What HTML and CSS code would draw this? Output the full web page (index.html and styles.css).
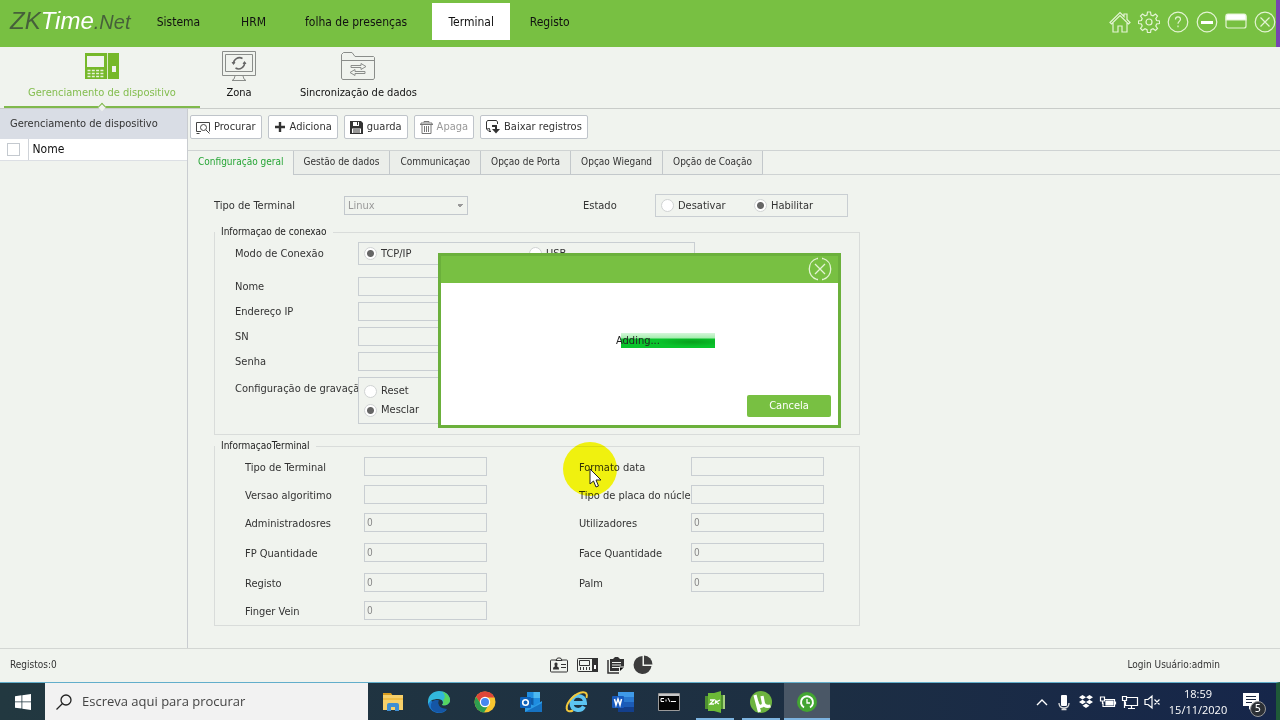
FILE: index.html
```html
<!DOCTYPE html>
<html lang="pt">
<head>
    <meta charset="UTF-8">
    <meta name="viewport" content="width=device-width, initial-scale=1.0">
    <title>ZKTime.Net</title>
    <link rel="stylesheet" href="styles.css">
</head>
<body>
    <div class="app">
        <header class="topbar">
            <h1 class="logo">ZK<span class="logo-time">Time</span><span class="logo-net">.Net</span></h1>
            <nav class="menu">
                <a href="#">Sistema</a>
                <a href="#">HRM</a>
                <a href="#">folha de presenças</a>
                <a href="#" class="active">Terminal</a>
                <a href="#">Registo</a>
            </nav>
            <div class="window-buttons">
                <button type="button" aria-label="Início">
                    <svg viewBox="0 0 22 22"><path d="M1 11.5 11 1.500l4 4V3h3v5.500l3 3-1.500 1.500L11 4.500l-8.500 8.500z M4 12v9h5v-6h4v6h5v-9"/></svg>
                </button>
                <button type="button" aria-label="Configurações">
                    <svg viewBox="0 0 22 22"><path d="M9.500 1h3l.5 3 2 .8 2.500-1.800 2 2-1.700 2.500.8 2 3 .5v2.500l-3 .5-.8 2 1.700 2.500-2 2-2.500-1.700-2 .8-.5 3h-3l-.5-3-2-.8-2.500 1.700-2-2 1.700-2.500-.8-2-3-.5V10l3-.5.8-2L2.500 5l2-2L7 4.800l2-.8z"/><circle cx="11" cy="11" r="3"/></svg>
                </button>
                <button type="button" aria-label="Ajuda">
                    <svg viewBox="0 0 22 22"><circle cx="11" cy="11" r="9.800"/><path d="M8.500 8.500c0-3.500 5-3.300 5-.2 0 2-2.500 2.200-2.500 4.400M11 14.500v1.800"/></svg>
                </button>
                <button type="button" aria-label="Minimizar">
                    <svg viewBox="0 0 22 22"><circle cx="11" cy="11" r="9.800"/><path class="thick" d="M5 11.500h12"/></svg>
                </button>
                <button type="button" aria-label="Maximizar">
                    <svg viewBox="0 0 22 22"><rect x="1" y="4" width="20" height="13" rx="2"/><path class="solid" d="M1 9V5q0-2 2-2h16q2 0 2 2v4z"/></svg>
                </button>
                <button type="button" aria-label="Fechar">
                    <svg viewBox="0 0 22 22"><circle cx="11" cy="11" r="9.800"/><path d="m6.500 6.500 9 9m0-9-9 9"/></svg>
                </button>
            </div>
        </header>

        <nav class="ribbon">
            <a href="#" class="active">
                <svg width="36" height="28" viewBox="0 0 36 28"><path fill="#76b82a" d="M1 1h34v26H1z"/><path fill="#f0f3ee" d="M3 4h17v11H3z M28 14h4v6h-4z"/><path stroke="#dcebc8" d="M23.500 1v26"/><path stroke="#e6f1d8" stroke-width="1.500" stroke-dasharray="3 1.300" d="M3.500 18.500h16M3.500 21.500h16M3.500 24.500h16"/></svg>
                Gerenciamento de dispositivo
            </a>
            <a href="#">
                <svg width="34" height="32" viewBox="0 0 34 32" fill="none" stroke="#8a8d8a"><path d="M.5 1.500h33v24H.5z M3.500 4.500h27v17h-27z M13 26l-1 3-2 1.500h14L22 29l-1-3"/><path stroke="#666" stroke-width="1.500" d="M11.500 14a6 6 0 0 1 9-5.500M22.500 12a6 6 0 0 1-9 6"/><path fill="#666" stroke="none" d="m9.500 12 4 0-2 3z m11 2 4 0-2-3z"/></svg>
                Zona
            </a>
            <a href="#">
                <svg width="34" height="28" viewBox="0 0 34 28" fill="none" stroke="#8a8d8a"><path d="M.5 26V2.500l2-2H11l3 4h18.500l1 1V26l-1 1.500h-31z M.5 8.500h33"/><path d="M10 13.500h10v-2l5 3-5 3v-2H10z M24 19.500H14v-2l-5 3 5 3v-2h10z"/></svg>
                Sincronização de dados
            </a>
        </nav>

        <div class="workspace">
            <aside class="sidebar">
                <h2>Gerenciamento de dispositivo</h2>
                <table>
                    <thead>
                        <tr>
                            <th class="check"><input type="checkbox" aria-label="Selecionar todos"></th>
                            <th>Nome</th>
                        </tr>
                    </thead>
                </table>
            </aside>

            <main class="content">
                <div class="toolbar">
                    <button type="button">
                        <svg width="14" height="14" viewBox="0 0 14 14" fill="none" stroke="#444"><path d="M5 11.500H.5v-9h13v9M.5 13.500h3M10 10l3.500 3.500"/><circle cx="7.500" cy="7.500" r="3"/></svg>
                        Procurar
                    </button>
                    <button type="button">
                        <svg width="12" height="12" viewBox="0 0 12 12"><path stroke="#333" stroke-width="2.400" d="M6 1v10M1 6h10"/></svg>
                        Adiciona
                    </button>
                    <button type="button">
                        <svg width="13" height="13" viewBox="0 0 13 13"><path fill="#333" d="M0 0h11l2 2v11H0z"/><path fill="#fff" d="M3 1h6v4H3z M2 7.500h9V12H2z"/><path stroke="#333" d="M7.500 1v3M3 9h7M3 11h7"/></svg>
                        guarda
                    </button>
                    <button type="button" disabled>
                        <svg width="13" height="13" viewBox="0 0 13 13" fill="none" stroke="#777"><path d="M1 3.500V2h11v1.500M0 3.500h13M4 1.500v-1h5v1M2 4v8.500h9V4M4.500 5v6M6.500 5v6M8.500 5v6"/></svg>
                        Apaga
                    </button>
                    <button type="button">
                        <svg width="14" height="14" viewBox="0 0 14 14" fill="none" stroke="#333"><path d="M5 11.500H3L.5 9V2l1-1.500h9l1 1.500v2M1 9l2.500-.5.5 3"/><path stroke-width="2" d="M6 6h4v6"/><path fill="#333" stroke="none" d="M6 9h8l-4 4.500z"/></svg>
                        Baixar registros
                    </button>
                </div>

                <nav class="tabs">
                    <a href="#" class="active">Configuração geral</a>
                    <a href="#">Gestão de dados</a>
                    <a href="#">Communicaçao</a>
                    <a href="#">Opçao de Porta</a>
                    <a href="#">Opçao Wiegand</a>
                    <a href="#">Opção de Coação</a>
                </nav>

                <form class="device-form">
                    <div class="form-top">
                        <label for="tipo">Tipo de Terminal</label>
                        <select id="tipo" disabled>
                            <option>Linux</option>
                        </select>
                        <span class="estado">Estado</span>
                        <div class="radio-box">
                            <label><input type="radio" name="estado">Desativar</label>
                            <label><input type="radio" name="estado" checked>Habilitar</label>
                        </div>
                    </div>

                    <fieldset class="conexao">
                        <legend>Informaçao de conexao</legend>
                        <span>Modo de Conexão</span>
                        <div class="radio-box modo">
                            <label><input type="radio" name="modo" checked>TCP/IP</label>
                            <label><input type="radio" name="modo">USB</label>
                        </div>
                        <label for="nome">Nome</label>
                        <input type="text" id="nome">
                        <label for="ip">Endereço IP</label>
                        <input type="text" id="ip">
                        <label for="sn">SN</label>
                        <input type="text" id="sn">
                        <label for="senha">Senha</label>
                        <input type="password" id="senha">
                        <span class="gravacao">Configuração de gravação</span>
                        <div class="radio-box stacked">
                            <label><input type="radio" name="gravacao">Reset</label>
                            <label><input type="radio" name="gravacao" checked>Mesclar</label>
                        </div>
                    </fieldset>

                    <fieldset class="terminal">
                        <legend>InformaçaoTerminal</legend>
                        <label for="t-tipo">Tipo de Terminal</label>
                        <input type="text" id="t-tipo" readonly>
                        <label for="t-data" class="second">Formato data</label>
                        <input type="text" id="t-data" readonly>

                        <label for="t-versao">Versao algoritimo</label>
                        <input type="text" id="t-versao" readonly>
                        <label for="t-placa" class="second">Tipo de placa do núcleo</label>
                        <input type="text" id="t-placa" readonly>

                        <label for="t-admin">Administradosres</label>
                        <input type="text" id="t-admin" value="0" readonly>
                        <label for="t-util" class="second">Utilizadores</label>
                        <input type="text" id="t-util" value="0" readonly>

                        <label for="t-fp">FP Quantidade</label>
                        <input type="text" id="t-fp" value="0" readonly>
                        <label for="t-face" class="second">Face Quantidade</label>
                        <input type="text" id="t-face" value="0" readonly>

                        <label for="t-reg">Registo</label>
                        <input type="text" id="t-reg" value="0" readonly>
                        <label for="t-palm" class="second">Palm</label>
                        <input type="text" id="t-palm" value="0" readonly>

                        <label for="t-vein">Finger Vein</label>
                        <input type="text" id="t-vein" value="0" readonly>
                    </fieldset>
                </form>
            </main>
        </div>

        <footer class="statusbar">
            <span class="count">Registos:0</span>
            <div class="status-icons">
                <svg width="18" height="16" viewBox="0 0 18 16" fill="none" stroke="#333"><rect x=".5" y="3" width="17" height="12" rx="1"/><path fill="#f0f3ee" d="M6 3.500 7.500 1h3L12 3.500z"/><path d="M11 7.500h5M11 10.500h5"/><path fill="#333" stroke="none" d="M3 12.500q0-3 2-3-1.500-4 1-4t1 4q2 0 2 3z"/></svg>
                <svg width="21" height="16" viewBox="0 0 21 16"><rect x=".5" y="1.500" width="20" height="13" rx="1" fill="none" stroke="#333"/><path fill="#333" d="M15 1h6v14h-6z"/><path fill="#fff" d="M17 8h2v4h-2z"/><path fill="none" stroke="#333" d="M2.500 3.500h10v5h-10z"/><path stroke="#333" stroke-width="3" stroke-dasharray="1 2" d="M3 11.500h10"/></svg>
                <svg width="17" height="18" viewBox="0 0 17 18"><path fill="none" stroke="#333" stroke-width="1.500" d="M1 4v13h11"/><path fill="#333" d="M3 3h3l2-2h3l2 2h4v8l-4 4H3z"/><path stroke="#f0f3ee" d="M5 6.500h9M5 9h9M5 11.500h7M12.500 15v-4H17"/></svg>
                <svg width="20" height="20" viewBox="0 0 20 20"><path fill="#3c3c3c" d="M9.500 1a9 9 0 1 0 9 10h-9z"/><path fill="#3c3c3c" d="M11 .500a9 9 0 0 1 8.500 9H11z"/></svg>
            </div>
            <span class="login">Login Usuário:admin</span>
        </footer>

        <dialog class="progress-dialog" open>
            <div class="dialog-title">
                <button type="button" aria-label="Fechar">
                    <svg viewBox="0 0 24 24"><path d="M9 1.500a11 11 0 0 0 0 21h1M15 1.500a11 11 0 0 1 0 21h-1M9 1.500h1M14 1.500h1M7 7l10 10M17 7 7 17"/></svg>
                </button>
            </div>
            <div class="dialog-body">
                <div class="progress">
                    <div class="progress-bar"></div>
                    <span>Adding...</span>
                </div>
                <button type="button" class="cancel">Cancela</button>
            </div>
        </dialog>

        <div class="pointer-halo"></div>
        <svg class="pointer" width="13" height="20" viewBox="0 0 13 20"><path fill="#fff" stroke="#222" d="M1 1v15l3.500-3 2.500 6 2.500-1L7 12h5z"/></svg>
    </div>

    <div class="taskbar">
        <button type="button" class="start" aria-label="Iniciar">
            <svg width="16" height="16" viewBox="0 0 16 16" fill="#fff"><path d="M0 2.200 6.500 1.300v6.200H0z M7.300 1.200 16 0v7.500H7.300z M0 8.300h6.500v6.200L0 13.700z M7.300 8.300H16V16l-8.700-1.200z"/></svg>
        </button>
        <label class="search">
            <svg width="16" height="16" viewBox="0 0 16 16" fill="none" stroke="#222" stroke-width="1.300"><circle cx="10" cy="6" r="5"/><path d="M6.500 9.500.5 15.500"/></svg>
            <input type="text" placeholder="Escreva aqui para procurar">
        </label>
        <div class="tasks">
            <button type="button" aria-label="Explorador de Ficheiros">
                <svg viewBox="0 0 24 24"><path fill="#d99b1c" d="M2 3h8l2 3H2z"/><path fill="#f7d06a" d="M2 5h20v15H2z"/><path fill="#f2bf45" d="M2 8h20v2H2z"/><path fill="#3f8fd4" d="M6 21v-6q0-2 2-2h8q2 0 2 2v6h-4v-4h-4v4z"/></svg>
            </button>
            <button type="button" aria-label="Edge">
                <svg viewBox="0 0 24 24"><path fill="#1b79cf" d="M1 12a11 11 0 0 0 19 7.500c-5 2-9-1-8.500-5C6 12 2 9 1 12z"/><path fill="#1556a5" d="M4 18c-1-7 4-9 8-7.500-2 3 0 8 8 8.500-4 5-13 5-16-1z"/><path fill="#32b8dc" d="M1 12C1 4.500 7 1 12 1c7 0 11 4.500 11 9 0 4-4 6-8 5 2-2 1-6-4-6-5 0-9 2-10 6z"/><path fill="#57d65f" d="M15 1.500c5 1.500 8 5 8 8.500 0 4-4 6-8 5 2-2 1.500-4 1-5 3-2 2-6-1-8.500z"/></svg>
            </button>
            <button type="button" aria-label="Chrome">
                <svg viewBox="0 0 24 24"><circle cx="12" cy="12" r="10.500" fill="#f9c62f"/><path fill="#dd4639" d="M3 6.700A10.500 10.500 0 0 1 21.500 7.500H12L8 14z"/><path fill="#2f9e4f" d="M3 6.700A10.500 10.500 0 0 0 11 22.500L15.500 15 8 14z"/><circle cx="12" cy="12" r="5.200" fill="#fff"/><circle cx="12" cy="12" r="4" fill="#4688f1"/></svg>
            </button>
            <button type="button" aria-label="Outlook">
                <svg viewBox="0 0 24 24"><path fill="#1f8de0" d="M8 2h13v14H8z"/><path fill="#4db8f0" d="M14.500 2H21v6h-6.500z"/><path fill="#0f5ca8" d="M8 8h6.500v7H8z"/><path fill="#2c9ce6" d="M6 11l9 5 8-5v11H6z"/><path fill="#1672c2" d="m6 22 17-9v9z"/><rect x="1" y="7" width="11" height="11" rx="1" fill="#0e62bb"/><circle cx="6.500" cy="12.500" r="2.800" fill="none" stroke="#fff" stroke-width="1.600"/></svg>
            </button>
            <button type="button" aria-label="Internet Explorer">
                <svg viewBox="0 0 24 24" fill="none"><path stroke="#5cc4f2" stroke-width="4" d="M6 13h14c0-9-13-10-13.500 0C6.500 21 16 22 19 16.500"/><path stroke="#f3c93c" stroke-width="2" d="M21.500 8C24-.5 14 1 7 8-1 16 .5 24 8 20.500"/></svg>
            </button>
            <button type="button" aria-label="Word">
                <svg viewBox="0 0 24 24"><path fill="#3f9ae8" d="M7 2h16v5H7z"/><path fill="#2a79d0" d="M7 7h16v5H7z"/><path fill="#1c5bb5" d="M7 12h16v5H7z"/><path fill="#133f8c" d="M7 17h16v5H7z"/><rect x="1" y="6" width="12" height="12" rx="1" fill="#185abd"/><path fill="none" stroke="#fff" stroke-width="1.500" d="m3.500 9 1.500 6 2-6 2 6 1.500-6"/></svg>
            </button>
            <button type="button" aria-label="Linha de comandos">
                <svg viewBox="0 0 24 24"><path fill="#050505" stroke="#9a9a9a" d="M1.500 3.500h21v17h-21z"/><path fill="#c8c8c8" d="M2 4h20v2H2z"/><path fill="none" stroke="#fff" d="M7 8.500H4v3h3M9 9.500v2M11 8l2 4M14 11.500h5"/></svg>
            </button>
            <button type="button" class="running" aria-label="ZK">
                <svg viewBox="0 0 24 24"><path fill="#4e9030" d="M2 6h4v13H2z M18 5h4v14h-4z"/><path fill="#a4cf7e" d="M20 5h2v14h-2z"/><path fill="#6cba37" d="M5 3h6l7-2v22l-7-2H5z"/><path fill="none" stroke="#fff" stroke-width="1.300" d="M7 10h4l-4 4h4M13 10l-1 4M17 10l-4 2 3 2"/></svg>
            </button>
            <button type="button" class="running" aria-label="uTorrent">
                <svg viewBox="0 0 24 24" fill="none"><circle cx="12" cy="12" r="11" fill="#6db43f"/><path stroke="#fff" stroke-width="3.200" d="m6 5 4.500 17M8 12c1 6 6 5 6.500 1.500L13 6m1.500 7.500c1 3 3 3.500 7 2.500"/></svg>
            </button>
            <button type="button" class="running current" aria-label="ZKTime.Net">
                <svg viewBox="0 0 24 24" fill="none"><circle cx="12" cy="12" r="10" fill="#43a532"/><path stroke="#fff" stroke-width="2" d="M9 17.500a6 6 0 1 1 6 0"/><path stroke="#fff" stroke-width="1.300" d="M12 9v4h3"/></svg>
            </button>
        </div>
        <div class="tray">
            <svg viewBox="0 0 20 20" fill="none" stroke="#fff" stroke-width="1.400"><path d="m5 13 5-5 5 5"/></svg>
            <svg viewBox="0 0 20 20"><rect x="7" y="3" width="6" height="11" rx="1" fill="#fff"/><path fill="none" stroke="#ddd" stroke-width="1.300" d="M5 11q0 5 5 5t5-5M10 16v2M7.500 17.500h5"/></svg>
            <svg viewBox="0 0 20 20" fill="#fff"><path d="m6.500 3 3.500 2.200L6.500 7.500 3 5.200z M13.500 3 17 5.200l-3.500 2.300L10 5.200z M6.500 7.700 10 10l-3.500 2.300L3 10z M13.500 7.700 17 10l-3.500 2.300L10 10z M10 11.500l3.500 2.200L10 16l-3.500-2.300z"/></svg>
            <svg viewBox="0 0 20 20" fill="none" stroke="#fff" stroke-width="1.200"><path d="M6 7.500h10.500v7H5v-4"/><path fill="#fff" d="M8 9h7v4H8z"/><path d="M17.500 9.500v3M2.500 5h4v4h-4zM4.500 9v3"/></svg>
            <svg viewBox="0 0 20 20" fill="none" stroke="#fff" stroke-width="1.200"><path d="M7 5.500h10.500v8h-12v-4M11.500 13.500v3M8 16.500h7M2.500 4.500h4v4h-4zM4.500 8.500V16"/></svg>
            <svg viewBox="0 0 20 20" fill="none" stroke="#fff" stroke-width="1.200"><path d="M3 7.500h3l4-3.500v12l-4-3.500H3zM12.500 7.500l5 5m0-5-5 5"/></svg>
        </div>
        <time class="clock">18:59<br>15/11/2020</time>
        <button type="button" class="notifications" aria-label="Notificações">
            <svg width="17" height="17" viewBox="0 0 17 17"><path fill="#fff" d="M0 0h16v13h-7l-3 4v-4H0z"/><path stroke="#1a2740" d="M3 3.500h10M3 6.500h10M3 9.500h6"/></svg>
            <span class="badge">5</span>
        </button>
    </div>
</body>
</html>
```
FILE: styles.css
```css
* {
    box-sizing: border-box;
}
body {
    margin: 0;
    min-height: 100vh;
    display: flex;
    flex-direction: column;
    font-family: Tahoma, "DejaVu Sans Condensed", "Noto Sans", sans-serif;
    font-size: 11px;
    line-height: 16px;
    color: #333;
    background-color: #f0f3ee;
}
a {
    color: inherit;
    text-decoration: none;
}
button, input, select {
    font: inherit;
    color: inherit;
}
svg {
    display: block;
    flex-shrink: 0;
}
.app {
    position: relative;
    flex: 1;
    display: flex;
    flex-direction: column;
}

/* Barra superior */
.topbar {
    display: flex;
    align-items: center;
    height: 47px;
    padding-bottom: 4px;
    background-color: #78c042;
    border-right: 4px solid #7745b0;
}
.logo {
    margin: 0;
    width: 130px;
    padding-left: 10px;
    font: italic 24px/28px "Liberation Sans", sans-serif;
    color: #46603a;
    white-space: nowrap;
}
.logo-time {
    color: #fff;
}
.logo-net {
    font-size: 20px;
}
.menu {
    display: flex;
    margin-left: 11px;
    font-size: 12px;
    color: #111;
}
.menu a {
    min-width: 75px;
    height: 37px;
    padding: 0 14px;
    line-height: 39px;
    text-align: center;
    white-space: nowrap;
}
.menu .active {
    min-width: 78px;
    margin: 0 2px 0 11px;
    background-color: #fff;
}
.window-buttons {
    display: flex;
    gap: 7px;
    margin-left: auto;
}
.window-buttons button {
    padding: 0;
    border: none;
    background: none;
}
.window-buttons svg {
    width: 22px;
    height: 22px;
    fill: none;
    stroke: #e4f4d4;
    stroke-width: 1.2;
}
.window-buttons .thick {
    stroke: #fff;
    stroke-width: 3;
}
.window-buttons .solid {
    fill: #fff;
}

/* Friso de módulos */
.ribbon {
    display: flex;
    height: 62px;
    padding-left: 4px;
    border-bottom: 1px solid #c9ccc9;
    color: #111;
}
.ribbon a {
    position: relative;
    display: flex;
    flex-direction: column;
    align-items: center;
    padding: 0 22px 7px;
    white-space: nowrap;
}
.ribbon a svg {
    margin: auto 0;
}
.ribbon .active {
    min-width: 196px;
    color: #83bd4e;
    border-bottom: 2px solid #80b94c;
    padding-bottom: 5px;
}
.ribbon .active::after {
    content: "";
    position: absolute;
    left: 50%;
    bottom: -4px;
    width: 5px;
    height: 5px;
    margin-left: -3px;
    border: solid #80b94c;
    border-width: 1px 0 0 1px;
    background-color: #f0f3ee;
    transform: rotate(45deg);
}

/* Área de trabalho */
.workspace {
    flex: 1;
    display: flex;
}
.sidebar {
    width: 188px;
    border-right: 1px solid #c9ccd0;
}
.sidebar h2 {
    margin: 0;
    padding: 0 10px;
    font-size: 11px;
    font-weight: normal;
    line-height: 30px;
    white-space: nowrap;
    background-color: #d9dde5;
}
.sidebar table {
    width: 100%;
    border-collapse: collapse;
    background-color: #fff;
}
.sidebar th {
    height: 21px;
    padding: 0 4px;
    border-bottom: 1px solid #dcdfe4;
    font-size: 12px;
    font-weight: normal;
    text-align: left;
    color: #111;
}
.sidebar .check {
    width: 28px;
    padding: 0 0 0 7px;
    border-right: 1px solid #cfd3d8;
}
input[type="checkbox"] {
    display: block;
    appearance: none;
    width: 13px;
    height: 13px;
    margin: 0;
    border: 1px solid #c4c9cf;
    background-color: #fff;
}
.content {
    flex: 1;
    min-width: 0;
}
.toolbar {
    display: flex;
    gap: 6px;
    padding: 6px 2px 11px;
}
.toolbar button {
    display: flex;
    align-items: center;
    gap: 4px;
    height: 24px;
    padding: 0 5px;
    border: 1px solid #bfc4ca;
    border-radius: 2px;
    background-color: #fff;
    white-space: nowrap;
}
.toolbar button:disabled {
    color: #999;
}
.tabs {
    display: flex;
    height: 25px;
    border-top: 1px solid #cfd3d3;
    font-size: 10px;
}
.tabs::after {
    content: "";
    flex: 1;
    border-left: 1px solid #c3c8cb;
    border-bottom: 1px solid #cfd3d3;
}
.tabs a {
    padding: 0 10px;
    border-left: 1px solid #c3c8cb;
    border-bottom: 1px solid #c3c8cb;
    line-height: 22px;
    white-space: nowrap;
    background-color: #ebeeea;
}
.tabs .active {
    padding: 0 9px;
    border-color: transparent;
    color: #27a536;
    background-color: #f0f3ee;
}

/* Formulário do dispositivo */
.device-form {
    max-width: 672px;
    padding: 19px 0 0 26px;
}
.form-top {
    display: flex;
    align-items: center;
    margin-bottom: 7px;
}
.form-top > label {
    width: 130px;
}
.form-top select {
    appearance: none;
    width: 124px;
    height: 19px;
    padding: 0 3px;
    border: 1px solid #c3c8cd;
    border-radius: 0;
    color: #999;
    opacity: 1;
    background: linear-gradient(45deg, transparent 50%, #999 50%) 112px 7px / 3px 3px no-repeat,
        linear-gradient(-45deg, transparent 50%, #999 50%) 115px 7px / 3px 3px no-repeat;
}
.form-top .estado {
    margin-left: 115px;
    width: 72px;
}
.form-top .radio-box {
    width: 193px;
}
.radio-box {
    display: grid;
    grid-template-columns: 1fr 1fr;
    align-items: center;
    min-height: 23px;
    padding-left: 5px;
    border: 1px solid #c9ced2;
}
.radio-box label {
    display: flex;
    align-items: center;
    gap: 4px;
}
input[type="radio"] {
    appearance: none;
    width: 13px;
    height: 13px;
    margin: 0;
    border: 1px solid #d0d3d3;
    border-radius: 50%;
    background-color: #fff;
}
input[type="radio"]:checked {
    background-image: radial-gradient(circle, #666 3px, #fff 4px);
}
fieldset {
    display: grid;
    align-items: center;
    margin: 0;
    border: 1px solid #d9dcda;
    white-space: nowrap;
}
legend {
    margin-left: -20px;
    padding: 0 6px;
    font-size: 10px;
    color: #222;
}
input[type="text"], input[type="password"] {
    width: 100%;
    height: 19px;
    padding: 0 2px;
    border: 1px solid #c9ced2;
    background-color: #f0f3ee;
}
.conexao {
    grid-template-columns: 123px 337px;
    row-gap: 6px;
    margin-bottom: 3px;
    padding: 2px 20px 10px;
}
.conexao > label, .conexao > span, .terminal label {
    overflow: hidden;
}
.modo {
    margin-bottom: 6px;
}
.conexao .gravacao {
    align-self: start;
    margin-top: 4px;
}
.conexao > span:first-of-type {
    margin-bottom: 6px;
}
.stacked {
    grid-template-columns: 1fr;
    align-content: center;
    row-gap: 3px;
    height: 47px;
}
.terminal {
    grid-template-columns: 119px 123px 204px 133px;
    grid-template-rows: 28px 28px 30px 30px 28px 19px;
    align-items: start;
    padding: 3px 30px 5px;
}
.terminal legend {
    margin-left: -30px;
}
.terminal label {
    line-height: 21px;
}
.terminal .second {
    padding-left: 92px;
}
.terminal input {
    font-size: 10px;
    color: #888;
}

/* Barra de estado */
.statusbar {
    display: flex;
    align-items: center;
    height: 34px;
    padding: 0 60px 2px 10px;
    border-top: 1px solid #d3d6d3;
    font-size: 10px;
}
.statusbar .count {
    width: 44%;
}
.status-icons {
    display: flex;
    align-items: center;
    gap: 9px;
    margin: 0 auto 0 8px;
}

/* Janela de progresso */
.progress-dialog {
    position: absolute;
    inset: 0 1px 2px 0;
    width: 403px;
    height: 175px;
    margin: auto;
    padding: 0;
    border: 3px solid #6bb03b;
    background-color: #fff;
    color: #222;
}
.dialog-title {
    display: flex;
    justify-content: flex-end;
    height: 27px;
    padding: 0 6px;
    background-color: #78c042;
}
.dialog-title button {
    padding: 0;
    border: none;
    background: none;
}
.dialog-title svg {
    width: 24px;
    height: 24px;
    fill: none;
    stroke: #e4f4d4;
    stroke-width: 1.3;
}
.dialog-body {
    display: flex;
    flex-direction: column;
    padding: 50px 7px 0;
}
.progress {
    position: relative;
    align-self: center;
    width: 99px;
    height: 15px;
    margin-left: 52px;
    padding-left: 5px;
}
.progress-bar {
    height: 15px;
    background: linear-gradient(#d5f7da, #a5edae 5px, transparent 6px),
        radial-gradient(ellipse at 75% 60%, #08a01c, #0ac42c 35px);
}
.progress span {
    position: absolute;
    left: 0;
    top: 0;
}
.cancel {
    align-self: flex-end;
    width: 84px;
    height: 22px;
    margin-top: 47px;
    border: none;
    border-radius: 2px;
    background-color: #78c042;
    color: #fff;
}
.pointer-halo {
    position: absolute;
    left: 563px;
    top: 442px;
    width: 54px;
    height: 54px;
    border-radius: 50%;
    background-color: #fffd10;
    mix-blend-mode: multiply;
}
.pointer {
    position: absolute;
    left: 589px;
    top: 468px;
}

/* Barra de tarefas */
.taskbar {
    display: flex;
    height: 38px;
    border-top: 1px solid #62aecb;
    border-right: 4px solid #1f5a38;
    background: linear-gradient(to right, #223840, #1d2f42 60%, #16264a);
    color: #fff;
}
.taskbar button {
    border: none;
    padding: 0;
    background: none;
}
.start {
    width: 45px;
    display: flex;
    align-items: center;
    justify-content: center;
}
.search {
    display: flex;
    align-items: center;
    gap: 8px;
    width: 323px;
    padding-left: 11px;
    background-color: #f2f2f2;
}
.search input[type="text"] {
    border: none;
    background: none;
    font: 13px/19px "Open Sans", sans-serif;
}
.search input::placeholder {
    color: #444;
}
.tasks {
    display: flex;
    padding-left: 2px;
}
.tasks button {
    display: flex;
    align-items: center;
    justify-content: center;
    width: 46px;
}
.tasks svg {
    width: 24px;
    height: 24px;
}
.taskbar .running {
    background: linear-gradient(#7db4e0, #7db4e0) center bottom / 38px 2px no-repeat;
}
.taskbar .current {
    background-color: #4a5766;
    background-size: 46px 2px;
}
.tray {
    display: flex;
    align-items: center;
    gap: 2px;
    margin-left: auto;
}
.tray svg {
    width: 20px;
    height: 20px;
}
.clock {
    width: 72px;
    padding-top: 3px;
    font-family: "Open Sans", sans-serif;
    text-align: center;
    white-space: nowrap;
}
.notifications {
    position: relative;
    width: 42px;
}
.notifications svg {
    margin-left: 9px;
}
.badge {
    position: absolute;
    left: 16px;
    top: 18px;
    width: 16px;
    height: 16px;
    border: 1px solid #999;
    border-radius: 50%;
    background-color: #2c3035;
    font-size: 11px;
    line-height: 14px;
    color: #fff;
}
```
